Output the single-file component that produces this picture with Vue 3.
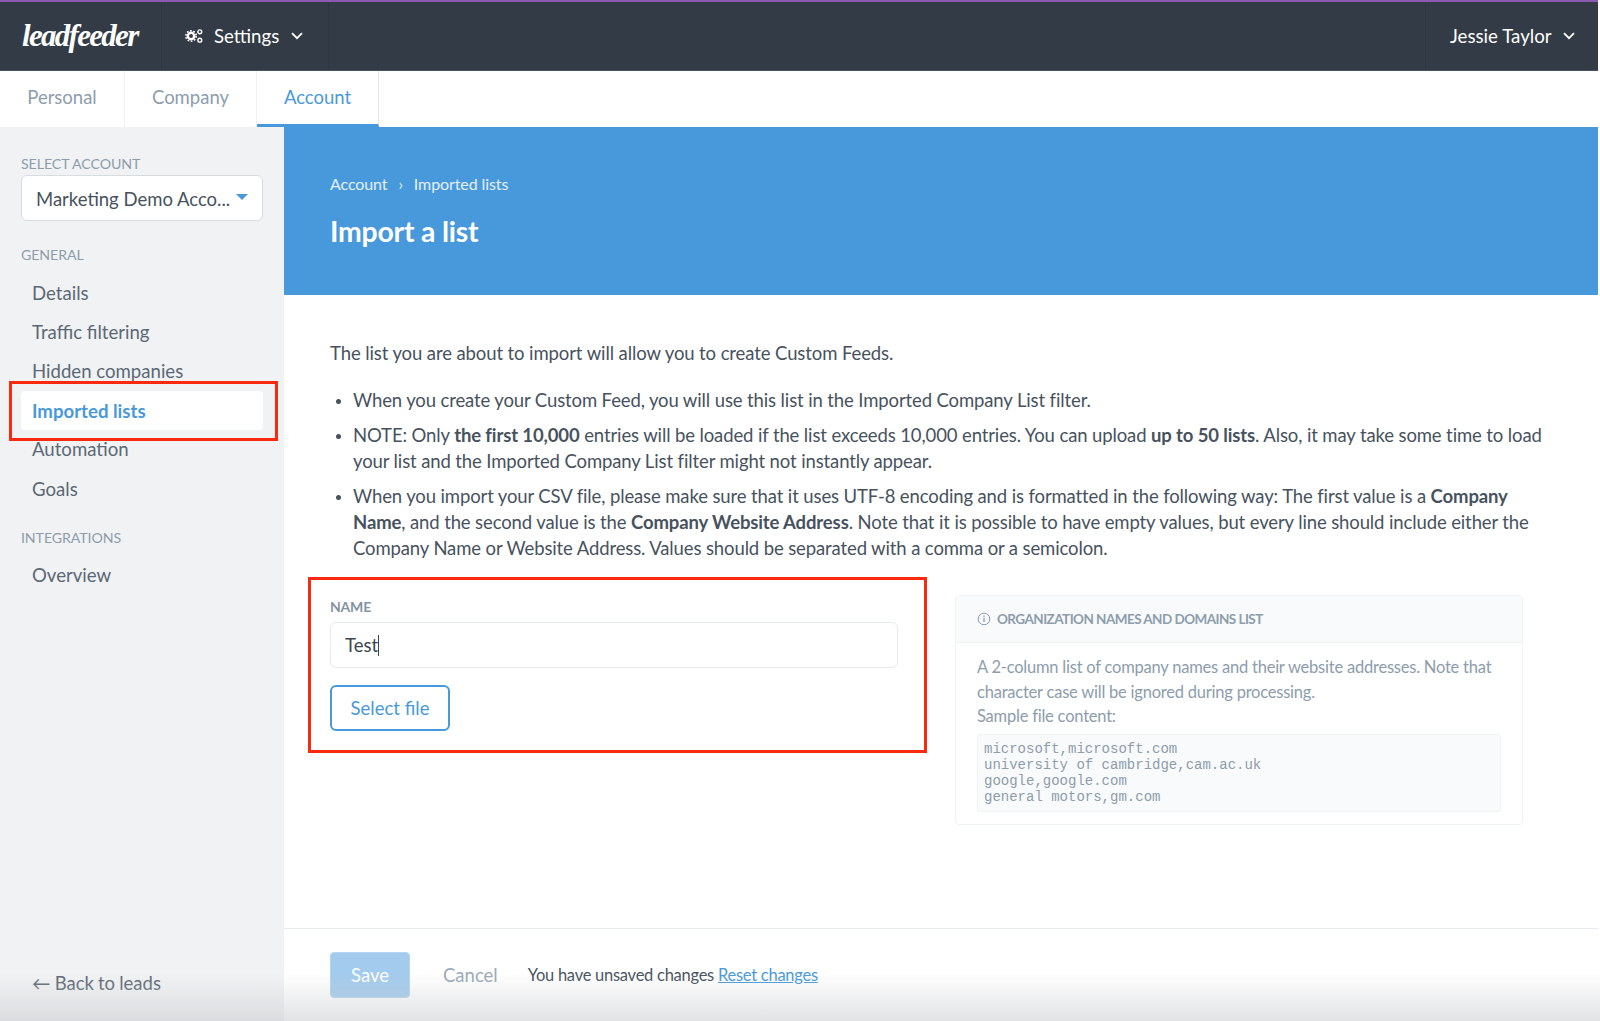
<script setup>
const general = ['Details', 'Traffic filtering', 'Hidden companies', 'Imported lists', 'Automation', 'Goals']
const sample = ['microsoft,microsoft.com', 'university of cambridge,cam.ac.uk', 'google,google.com', 'general motors,gm.com']
</script>

<template>
  <div class="page">
    <header class="topbar">
      <div class="logo">leadfeeder</div>
      <div class="menu">
        <svg class="gears" viewBox="0 0 18 14" width="18" height="14">
          <circle cx="6" cy="7" r="3.2" fill="none" stroke="#fff" stroke-width="2.4" />
          <circle cx="6" cy="7" r="5.2" fill="none" stroke="#fff" stroke-width="1.6" stroke-dasharray="1.7 1.57" />
          <circle cx="14.8" cy="2.8" r="1.9" fill="none" stroke="#fff" stroke-width="1.4" />
          <circle cx="14.8" cy="11.2" r="1.9" fill="none" stroke="#fff" stroke-width="1.4" />
        </svg>
        <span>Settings</span>
        <svg class="chev" viewBox="0 0 12 8" width="12" height="8"><path d="M1 1.2l5 5 5-5" fill="none" stroke="#fff" stroke-width="1.8" /></svg>
      </div>
      <div class="user">
        <span>Jessie Taylor</span>
        <svg class="chev" viewBox="0 0 12 8" width="12" height="8"><path d="M1 1.2l5 5 5-5" fill="none" stroke="#fff" stroke-width="1.8" /></svg>
      </div>
    </header>

    <nav class="tabs">
      <a class="tab t1">Personal</a>
      <a class="tab t2">Company</a>
      <a class="tab t3 active">Account</a>
    </nav>

    <div class="body">
      <aside class="side">
        <div class="group-label first">SELECT ACCOUNT</div>
        <div class="select">
          <span>Marketing Demo Acco...</span>
          <i class="caret"></i>
        </div>
        <div class="group-label second">GENERAL</div>
        <ul class="nav">
          <li v-for="g in general" :key="g" :class="{ current: g === 'Imported lists' }">{{ g }}</li>
        </ul>
        <div class="group-label third">INTEGRATIONS</div>
        <ul class="nav last">
          <li>Overview</li>
        </ul>
        <div class="back">← Back to leads</div>
      </aside>

      <main class="main">
        <section class="hero">
          <div class="crumbs"><span>Account</span><span class="sep">›</span><span>Imported lists</span></div>
          <h1>Import a list</h1>
        </section>

        <section class="content">
          <p class="intro">The list you are about to import will allow you to create Custom Feeds.</p>
          <ul class="bullets">
            <li>When you create your Custom Feed, you will use this list in the Imported Company List filter.</li>
            <li>NOTE: Only <b>the first 10,000</b> entries will be loaded if the list exceeds 10,000 entries. You can upload <b>up to 50 lists</b>. Also, it may take some time to load your list and the Imported Company List filter might not instantly appear.</li>
            <li>When you import your CSV file, please make sure that it uses UTF-8 encoding and is formatted in the following way: The first value is a <b>Company Name</b>, and the second value is the <b>Company Website Address</b>. Note that it is possible to have empty values, but every line should include either the Company Name or Website Address. Values should be separated with a comma or a semicolon.</li>
          </ul>

          <div class="columns">
            <div class="form">
              <label>NAME</label>
              <div class="input"><span>Test</span><i class="cursor"></i></div>
              <button class="select-file">Select file</button>
            </div>
            <div class="info">
              <div class="info-head">
                <svg viewBox="0 0 14 14" width="14" height="14">
                  <circle cx="7" cy="7" r="5.8" fill="none" stroke="#8c9cab" stroke-width="1" />
                  <path d="M7 6v4M7 3.6v1.3" stroke="#8c9cab" stroke-width="1.3" fill="none" />
                </svg>
                <span>ORGANIZATION NAMES AND DOMAINS LIST</span>
              </div>
              <div class="info-body">
                <p>A 2-column list of company names and their website addresses. Note that character case will be ignored during processing.<br />Sample file content:</p>
                <pre>{{ sample.join('\n') }}</pre>
              </div>
            </div>
          </div>
        </section>

        <footer class="foot">
          <button class="save">Save</button>
          <span class="cancel">Cancel</span>
          <span class="unsaved">You have unsaved changes <a>Reset changes</a></span>
        </footer>
      </main>
    </div>

    <div class="mark mark-nav"></div>
    <div class="mark mark-form"></div>
    <div class="fade"></div>
  </div>
</template>

<style>
html, body { margin: 0; padding: 0; background: #fff; }
</style>

<style scoped>
* { box-sizing: border-box; }
.page {
  position: relative;
  width: 1600px;
  height: 1021px;
  padding-right: 2px;
  overflow: hidden;
  display: flex;
  flex-direction: column;
  font-family: Lato, "Open Sans", sans-serif;
  font-variant-ligatures: common-ligatures;
  color: #47525e;
  background: #fff;
}
.topbar {
  height: 71px;
  flex: none;
  display: flex;
  align-items: center;
  background: #333b46;
  border-top: 2px solid #8a5bb0;
  border-bottom: 1px solid #4a525c;
  color: #fff;
}
.logo {
  width: 162px;
  height: 100%;
  padding-left: 22px;
  display: flex;
  align-items: center;
  font-family: "Liberation Serif", serif;
  font-style: italic;
  font-weight: 700;
  font-size: 31px;
  letter-spacing: -1.7px;
  border-right: 1px solid #2f3640;
}
.menu {
  width: 167px;
  height: 100%;
  padding-left: 23px;
  display: flex;
  align-items: center;
  font-size: 18.6px;
  border-right: 1px solid #2f3640;
}
.gears { margin-right: 11px; }
.menu .chev { margin-left: 12px; }
.user {
  margin-left: auto;
  width: 173px;
  height: 100%;
  padding-left: 24px;
  display: flex;
  align-items: center;
  font-size: 18.7px;
  border-left: 1px solid #2f3640;
}
.user .chev { margin-left: 11px; }
.tabs {
  height: 56px;
  flex: none;
  display: flex;
  background: #fff;
  font-size: 18.5px;
  color: #8d9dac;
}
.tab {
  display: flex;
  align-items: center;
  justify-content: center;
  border-right: 1px solid #eef0f2;
  height: 100%;
  padding-bottom: 4px;
}
.t1 { width: 125px; }
.t2 { width: 132px; }
.t3 { width: 122px; }
.active {
  color: #4899dc;
  border-bottom: 3px solid #4899dc;
  padding-bottom: 1px;
  border-right-color: #e4e7ea;
}
.body { flex: 1; display: flex; min-height: 0; }
.side {
  width: 284px;
  flex: none;
  background: #f1f2f4;
  padding: 28px 21px 0;
  display: flex;
  flex-direction: column;
}
.group-label {
  font-size: 14.2px;
  line-height: 18px;
  color: #8d9dac;
  letter-spacing: -0.1px;
}
.second { margin-top: 25px; }
.third { margin-top: 21px; }
.select {
  margin-top: 2px;
  height: 46px;
  background: #fff;
  border: 1px solid #d9dcdf;
  border-radius: 6px;
  display: flex;
  align-items: center;
  justify-content: space-between;
  padding: 1px 14px 0 14px;
  font-size: 18.5px;
  color: #47525e;
  white-space: nowrap;
}
.caret {
  width: 0;
  height: 0;
  border: 6px solid transparent;
  border-top: 6px solid #4899dc;
  border-bottom: 0;
  margin-bottom: 3px;
}
.nav { list-style: none; margin: 9px 0 0; padding: 0; }
.nav.last { margin-top: 8px; }
.nav li {
  height: 39.2px;
  padding-left: 11px;
  display: flex;
  align-items: center;
  font-size: 18.6px;
  color: #5b6875;
  border-radius: 4px;
}
.nav .current { background: #fff; color: #4899dc; font-weight: 700; padding-top: 1px; }
.back {
  margin-top: auto;
  margin-bottom: 26px;
  padding-left: 11px;
  font-size: 18.5px;
  line-height: 24px;
  word-spacing: -0.6px;
  color: #5b6875;
}
.main { flex: 1; display: flex; flex-direction: column; min-width: 0; }
.hero {
  height: 168px;
  flex: none;
  background: #4899dc;
  color: #fff;
  padding: 46px 46px 0;
}
.crumbs { display: flex; font-size: 16px; line-height: 22px; color: #e4f0fa; letter-spacing: -0.1px; }
.sep { margin: 0 11px 0 11px; }
h1 { margin: 18px 0 0; font-size: 28.4px; line-height: 36px; font-weight: 700; letter-spacing: -0.2px; }
.content { flex: 1; padding: 45px 46px 0; min-height: 0; color: #47525e; }
.intro { margin: 0; font-size: 18.5px; line-height: 26px; letter-spacing: -0.1px; }
.bullets {
  margin: 21px 0 0;
  padding-left: 23px;
  font-size: 18.5px;
  line-height: 26px;
  letter-spacing: -0.12px;
  width: 1222px;
}
.bullets li { margin-bottom: 9px; }
.bullets li::marker { font-size: 15px; }
.bullets b { font-weight: 700; }
.columns { display: flex; align-items: flex-start; margin-top: 32px; }
.form { width: 568px; flex: none; }
label { display: block; font-size: 14px; line-height: 18px; color: #8493a2; font-weight: 700; letter-spacing: -0.2px; margin-top: 5px; }
.input {
  margin-top: 6px;
  height: 46px;
  border: 1px solid #e6eaee;
  border-radius: 6px;
  padding: 0 14px;
  display: flex;
  align-items: center;
  font-size: 18.5px;
  color: #3c4650;
}
.cursor { width: 1px; height: 21px; background: #3c4650; }
.select-file {
  margin-top: 17px;
  width: 120px;
  height: 46px;
  background: #fff;
  border: 2px solid #4899dc;
  border-radius: 6px;
  color: #4899dc;
  font: 18.5px Lato, sans-serif;
  font-variant-ligatures: common-ligatures;
}
.info {
  width: 568px;
  margin-left: 57px;
  margin-top: 2px;
  border: 1px solid #eff2f4;
  border-radius: 4px;
  color: #8d9dac;
}
.info-head {
  height: 47px;
  background: #f9fafb;
  border-bottom: 1px solid #eff2f4;
  padding-left: 21px;
  display: flex;
  align-items: center;
  gap: 6px;
  font-size: 13.5px;
  font-weight: 700;
  letter-spacing: -0.55px;
  color: #8d9dac;
}
.info-body { padding: 12px 21px 12px; }
.info-body p { margin: 0; font-size: 16.5px; line-height: 24.5px; letter-spacing: -0.22px; }
pre {
  margin: 5px 0 0;
  height: 78px;
  padding: 6px 6px;
  background: #f9fafb;
  border: 1px solid #f0f3f5;
  border-radius: 3px;
  font: 14px/16.2px "Liberation Mono", monospace;
  color: #8d9dac;
}
.foot {
  height: 93px;
  flex: none;
  border-top: 1px solid #e7ebee;
  padding: 23px 0 0 46px;
  display: flex;
  align-items: flex-start;
}
.save {
  width: 80px;
  height: 46px;
  background: #a3cbed;
  border: 1px solid #b4d5f0;
  border-radius: 4px;
  color: #fff;
  font: 18.5px Lato, sans-serif;
}
.cancel { margin-left: 33px; height: 46px; line-height: 46px; font-size: 18.5px; color: #9aa9b7; }
.unsaved { margin-left: 30px; height: 46px; line-height: 46px; font-size: 16.5px; letter-spacing: -0.26px; color: #47525e; }
.unsaved a { color: #4899dc; text-decoration: underline; }
.mark { position: absolute; border: 3px solid #fa2a10; }
.mark-nav { left: 9px; top: 381px; width: 269px; height: 60px; }
.mark-form { left: 308px; top: 577px; width: 619px; height: 176px; }
.fade {
  position: absolute;
  left: 0;
  right: 0;
  bottom: 0;
  height: 48px;
  background: linear-gradient(to bottom, rgba(200, 203, 206, 0), rgba(200, 203, 206, 0.55));
  pointer-events: none;
}
</style>
